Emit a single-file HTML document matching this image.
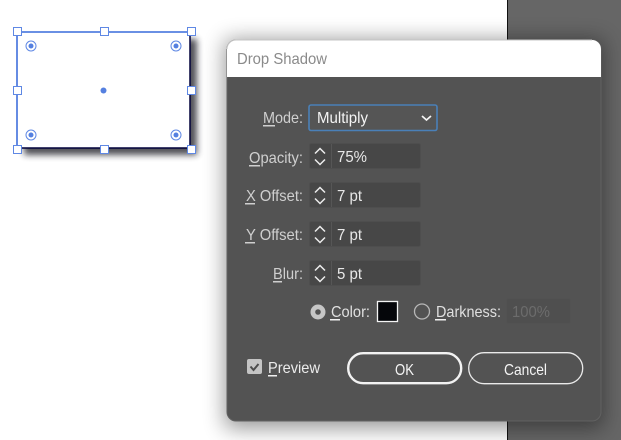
<!DOCTYPE html>
<html><head><meta charset="utf-8"><style>
html,body{margin:0;padding:0;width:621px;height:440px;overflow:hidden;background:#fff}
svg{position:absolute;left:0;top:0;display:block}
text{font-family:"Liberation Sans",sans-serif;font-size:16px;fill:#e8e8e8}
.l{fill:#cfcfcf}
</style></head><body>
<svg width="621" height="440" viewBox="0 0 621 440" xmlns="http://www.w3.org/2000/svg">
<defs>
<filter id="b1" x="-20%" y="-20%" width="140%" height="140%"><feGaussianBlur stdDeviation="3.2"/></filter>
<filter id="b2" x="-20%" y="-20%" width="140%" height="140%"><feGaussianBlur stdDeviation="11"/></filter>
</defs>
<rect width="621" height="440" fill="#fff"/>
<rect x="508" width="113" height="440" fill="#666"/>
<rect x="507" width="1" height="440" fill="#111"/>
<!-- selected rectangle -->
<rect x="24" y="39" width="173" height="116" fill="#20222c" opacity=".78" filter="url(#b1)"/>
<rect x="17" y="32" width="173" height="116" fill="#fff"/>
<path d="M190 32V148H17" fill="none" stroke="#00003a" stroke-width="1.5"/>
<path d="M17 148V32H190" fill="none" stroke="#5580e0" stroke-width="1.800"/>
<g fill="#fff" stroke="#5f88e4" stroke-width="1">
<rect x="13.500" y="27.500" width="8" height="8"/><rect x="100.500" y="27.500" width="8" height="8"/><rect x="187.500" y="27.500" width="8" height="8"/>
<rect x="13.500" y="86.500" width="8" height="8"/><rect x="187.500" y="86.500" width="8" height="8"/>
<rect x="13.500" y="145.500" width="8" height="8"/><rect x="100.500" y="145.500" width="8" height="8"/><rect x="187.500" y="145.500" width="8" height="8"/>
</g>
<g fill="none" stroke="#5f88e4" stroke-width="1"><circle cx="31" cy="46" r="5"/><circle cx="176" cy="46" r="5"/><circle cx="31" cy="135" r="5"/><circle cx="176" cy="135" r="5"/></g>
<g fill="#5580e0"><circle cx="31" cy="46" r="2.500"/><circle cx="176" cy="46" r="2.500"/><circle cx="31" cy="135" r="2.500"/><circle cx="176" cy="135" r="2.500"/><circle cx="103.500" cy="90.500" r="3"/></g>
<!-- dialog shadow -->
<rect x="225" y="40" width="378" height="388" fill="#000" opacity=".42" filter="url(#b2)"/>
<rect x="507" y="0" width="1" height="40" fill="#111"/>
<rect x="507" y="421" width="1" height="19" fill="#111"/>
<!-- dialog -->
<rect x="227" y="40" width="374" height="381" rx="9" fill="#535353" stroke="#616161" stroke-width="1"/>
<path d="M227 77V49a9 9 0 0 1 9-9H592a9 9 0 0 1 9 9V77Z" fill="#fff"/>
<path d="M227 49a9 9 0 0 1 9-9H592" fill="none" stroke="#c4c4c4"/>
<text x="237" y="64" textLength="90" lengthAdjust="spacingAndGlyphs" style="fill:#8a8a8a">Drop Shadow</text>
<!-- labels -->
<text class="l" x="263" y="123" textLength="40" lengthAdjust="spacingAndGlyphs">Mode:</text>
<text class="l" x="249" y="163" textLength="54" lengthAdjust="spacingAndGlyphs">Opacity:</text>
<text class="l" x="246" y="201" textLength="57" lengthAdjust="spacingAndGlyphs">X Offset:</text>
<text class="l" x="246" y="240" textLength="57" lengthAdjust="spacingAndGlyphs">Y Offset:</text>
<text class="l" x="273" y="279" textLength="30" lengthAdjust="spacingAndGlyphs">Blur:</text>
<g fill="#cfcfcf"><rect x="263" y="125" width="12" height="1.500"/><rect x="249" y="165" width="11" height="1.500"/><rect x="245" y="203" width="10" height="1.500"/><rect x="245" y="242" width="10" height="1.500"/><rect x="273" y="281" width="9" height="1.500"/></g>
<!-- mode select -->
<rect x="309" y="105" width="128" height="25.500" rx="2" fill="#555" stroke="#4a80b8" stroke-width="1.600"/>
<text x="317" y="123" textLength="51" lengthAdjust="spacingAndGlyphs" style="fill:#f4f4f4">Multiply</text>
<path d="M422 116l4.500 4 4.500-4" fill="none" stroke="#f4f4f4" stroke-width="1.700"/>
<!-- fields -->
<g fill="#474747" stroke="#4e4e4e" stroke-width="1">
<rect x="309.500" y="143.500" width="111" height="25" rx="2"/>
<rect x="309.500" y="182.500" width="111" height="25" rx="2"/>
<rect x="309.500" y="221.500" width="111" height="25" rx="2"/>
<rect x="309.500" y="260.500" width="111" height="25" rx="2"/>
<rect x="506.500" y="298.500" width="64" height="25" rx="2" fill="#4f4f4f" stroke="#525252"/>
</g>
<g fill="#565656"><rect x="331" y="144" width="1" height="24"/><rect x="331" y="183" width="1" height="24"/><rect x="331" y="222" width="1" height="24"/><rect x="331" y="261" width="1" height="24"/></g>
<g fill="none" stroke="#ececec" stroke-width="1.500">
<path d="M315 153.500l5-5 5 5M315 159.500l5 5 5-5"/>
<path d="M315 192.500l5-5 5 5M315 198.500l5 5 5-5"/>
<path d="M315 231.500l5-5 5 5M315 237.500l5 5 5-5"/>
<path d="M315 270.500l5-5 5 5M315 276.500l5 5 5-5"/>
</g>
<text x="337" y="162" textLength="30" lengthAdjust="spacingAndGlyphs">75%</text>
<text x="337" y="201" textLength="25" lengthAdjust="spacingAndGlyphs">7 pt</text>
<text x="337" y="240" textLength="25" lengthAdjust="spacingAndGlyphs">7 pt</text>
<text x="337" y="279" textLength="25" lengthAdjust="spacingAndGlyphs">5 pt</text>
<!-- radios -->
<circle cx="318" cy="312" r="7.500" fill="#c6c6c6"/><circle cx="318" cy="312" r="2.800" fill="#535353"/>
<circle cx="422" cy="311.500" r="7.500" fill="none" stroke="#b8b8b8" stroke-width="1.300"/>
<text x="331" y="317" textLength="39" lengthAdjust="spacingAndGlyphs" style="fill:#e0e0e0">Color:</text>
<rect x="330" y="319" width="10" height="1.500" fill="#f0f0f0"/>
<rect x="377.500" y="301.500" width="20" height="20" fill="#05060a" stroke="#f4f4f4" stroke-width="1.300"/>
<text x="436" y="317" textLength="65" lengthAdjust="spacingAndGlyphs" style="fill:#e0e0e0">Darkness:</text>
<rect x="435" y="319" width="11" height="1.500" fill="#f0f0f0"/>
<text x="512" y="317" textLength="38" lengthAdjust="spacingAndGlyphs" style="fill:#6c6c6c">100%</text>
<!-- preview -->
<rect x="247" y="359" width="15" height="15" rx="2" fill="#c4c4c4"/>
<path d="M250.500 366.500l3 3.500 5-6" fill="none" stroke="#4c4c4c" stroke-width="2"/>
<text x="268" y="373" textLength="52" lengthAdjust="spacingAndGlyphs" style="fill:#ececec">Preview</text>
<rect x="268" y="375" width="9" height="1.500" fill="#f0f0f0"/>
<!-- buttons -->
<rect x="348.200" y="353.200" width="113" height="30" rx="15" fill="none" stroke="#f2f2f2" stroke-width="2.400"/>
<rect x="468.700" y="352.700" width="114" height="31" rx="15.500" fill="none" stroke="#eaeaea" stroke-width="1.300"/>
<text x="395" y="375" textLength="19" lengthAdjust="spacingAndGlyphs" style="fill:#f4f4f4">OK</text>
<text x="504" y="375" textLength="43" lengthAdjust="spacingAndGlyphs" style="fill:#f4f4f4">Cancel</text>
</svg>
</body></html>
